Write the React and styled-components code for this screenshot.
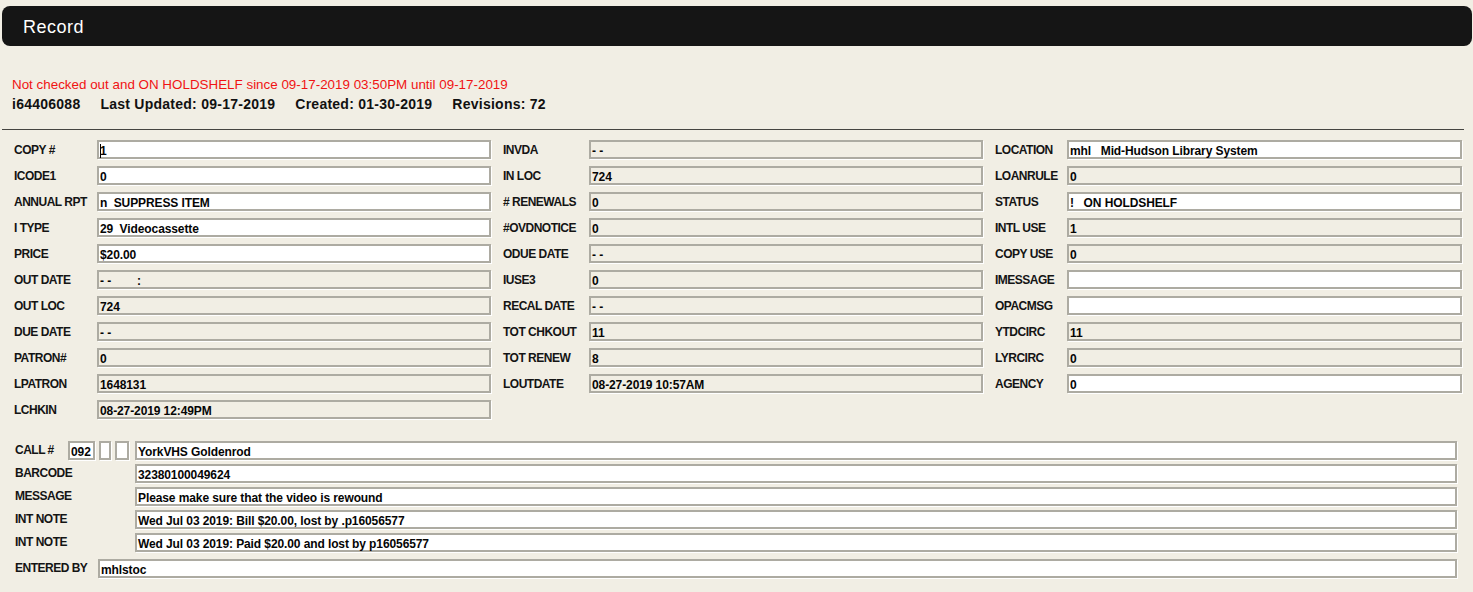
import React from "react";
import styled, { createGlobalStyle } from "styled-components";

const GlobalStyle = createGlobalStyle`
  html, body {
    margin: 0;
    padding: 0;
    background: #f1eee4;
  }
  body {
    font-family: "Liberation Sans", Arial, sans-serif;
    color: #111;
  }
`;

const Page = styled.div`
  width: 1473px;
  min-height: 592px;
  padding-top: 6px;
  box-sizing: border-box;
`;

const TitleBar = styled.div`
  margin: 0 1px 0 2px;
  height: 40px;
  background: #151515;
  border-radius: 8px;
  display: flex;
  align-items: center;
  padding-left: 21px;
`;

const Title = styled.h1`
  margin: 0;
  padding-top: 1px;
  font-size: 18px;
  font-weight: 400;
  letter-spacing: 0.5px;
  color: #ffffff;
  line-height: 40px;
`;

const Status = styled.div`
  margin-top: 31px;
  padding-left: 12px;
`;

const Alert = styled.div`
  font-size: 13.4px;
  line-height: 16px;
  color: #f01313;
`;

const Meta = styled.div`
  margin-top: 2px;
  display: flex;
  gap: 20px;
  font-size: 14px;
  font-weight: 700;
  line-height: 19px;
  letter-spacing: 0.25px;
  color: #111;
`;

const Divider = styled.hr`
  margin: 15px 9px 0 2px;
  border: 0;
  border-top: 1px solid #454440;
  height: 0;
`;

const FieldColumns = styled.div`
  margin-top: 10px;
  padding-left: 14px;
  display: flex;
  align-items: flex-start;
  gap: 12px;
`;

const Column = styled.div`
  display: grid;
  grid-template-columns: ${(p) => p.$labelWidth}px ${(p) => p.$inputWidth}px;
  grid-auto-rows: 19px;
  row-gap: 7px;
`;

const Label = styled.div`
  font-size: 12px;
  font-weight: 700;
  letter-spacing: -0.5px;
  line-height: 19px;
  padding-top: ${(p) => (p.$raised ? 0 : 1)}px;
  white-space: nowrap;
  color: #141414;
`;

const Field = styled.div`
  box-sizing: border-box;
  height: 19px;
  border: 2px solid #adaba2;
  box-shadow: 1px 1px 0 #ffffff;
  background: ${(p) => (p.$editable ? "#ffffff" : "#f1eee4")};
  padding: 2px 0 0 1px;
  font-size: 12px;
  font-weight: 700;
  letter-spacing: -0.1px;
  line-height: 14px;
  white-space: pre;
  color: #050505;
  width: ${(p) => (p.$width ? `${p.$width}px` : "auto")};
  flex: ${(p) => (p.$grow ? "1 1 auto" : "0 0 auto")};
`;

const CallText = styled(Field)`
  margin-left: 2px;
`;

const Caret = styled.span`
  display: inline-block;
  width: 1px;
  height: 14px;
  background: #000;
  vertical-align: -3px;
  margin-right: -1px;
`;

const Bottom = styled.div`
  margin-top: 22px;
  padding: 0 16px 0 15px;
  display: flex;
  flex-direction: column;
  gap: 4px;
`;

const BottomRow = styled.div`
  display: flex;
  align-items: flex-start;
  gap: ${(p) => p.$gap || 0}px;
  margin-top: ${(p) => p.$offset || 0}px;
`;

const BottomLabel = styled(Label)`
  flex: 0 0 ${(p) => p.$width}px;
`;

const columns = [
  {
    labelWidth: 83,
    inputWidth: 394,
    fields: [
      { label: "COPY #", value: "1", editable: true, caret: true },
      { label: "ICODE1", value: "0", editable: true },
      { label: "ANNUAL RPT", value: "n  SUPPRESS ITEM", editable: true },
      { label: "I TYPE", value: "29  Videocassette", editable: true },
      { label: "PRICE", value: "$20.00", editable: true },
      { label: "OUT DATE", value: "- -        :" },
      { label: "OUT LOC", value: "724" },
      { label: "DUE DATE", value: "- -" },
      { label: "PATRON#", value: "0" },
      { label: "LPATRON", value: "1648131" },
      { label: "LCHKIN", value: "08-27-2019 12:49PM" },
    ],
  },
  {
    labelWidth: 86,
    inputWidth: 394,
    fields: [
      { label: "INVDA", value: "- -" },
      { label: "IN LOC", value: "724" },
      { label: "# RENEWALS", value: "0" },
      { label: "#OVDNOTICE", value: "0" },
      { label: "ODUE DATE", value: "- -" },
      { label: "IUSE3", value: "0" },
      { label: "RECAL DATE", value: "- -" },
      { label: "TOT CHKOUT", value: "11" },
      { label: "TOT RENEW", value: "8" },
      { label: "LOUTDATE", value: "08-27-2019 10:57AM" },
    ],
  },
  {
    labelWidth: 72,
    inputWidth: 395,
    fields: [
      { label: "LOCATION", value: "mhl   Mid-Hudson Library System", editable: true },
      { label: "LOANRULE", value: "0" },
      { label: "STATUS", value: "!   ON HOLDSHELF", editable: true },
      { label: "INTL USE", value: "1" },
      { label: "COPY USE", value: "0" },
      { label: "IMESSAGE", value: "", editable: true },
      { label: "OPACMSG", value: "", editable: true },
      { label: "YTDCIRC", value: "11" },
      { label: "LYRCIRC", value: "0" },
      { label: "AGENCY", value: "0", editable: true },
    ],
  },
];

const notes = [
  { label: "BARCODE", value: "32380100049624" },
  { label: "MESSAGE", value: "Please make sure that the video is rewound" },
  { label: "INT NOTE", value: "Wed Jul 03 2019: Bill $20.00, lost by .p16056577" },
  { label: "INT NOTE", value: "Wed Jul 03 2019: Paid $20.00 and lost by p16056577" },
];

export default function App() {
  return (
    <>
      <GlobalStyle />
      <Page>
        <TitleBar>
          <Title>Record</Title>
        </TitleBar>

        <Status>
          <Alert>
            Not checked out and ON HOLDSHELF since 09-17-2019 03:50PM until 09-17-2019
          </Alert>
          <Meta>
            <span>i64406088</span>
            <span>Last Updated: 09-17-2019</span>
            <span>Created: 01-30-2019</span>
            <span>Revisions: 72</span>
          </Meta>
        </Status>

        <Divider />

        <FieldColumns>
          {columns.map((col, ci) => (
            <Column key={ci} $labelWidth={col.labelWidth} $inputWidth={col.inputWidth}>
              {col.fields.map((f, fi) => (
                <React.Fragment key={fi}>
                  <Label>{f.label}</Label>
                  <Field $editable={f.editable}>
                    {f.caret && <Caret />}
                    {f.value}
                  </Field>
                </React.Fragment>
              ))}
            </Column>
          ))}
        </FieldColumns>

        <Bottom>
          <BottomRow $gap={4}>
            <BottomLabel $raised $width={49}>CALL #</BottomLabel>
            <Field $editable $width={27}>092</Field>
            <Field $editable $width={12}></Field>
            <Field $editable $width={14}></Field>
            <CallText $editable $grow>YorkVHS Goldenrod</CallText>
          </BottomRow>
          {notes.map((n, i) => (
            <BottomRow key={i}>
              <BottomLabel $raised $width={120}>{n.label}</BottomLabel>
              <Field $editable $grow>{n.value}</Field>
            </BottomRow>
          ))}
          <BottomRow $offset={3}>
            <BottomLabel $raised $width={83}>ENTERED BY</BottomLabel>
            <Field $editable $grow>mhlstoc</Field>
          </BottomRow>
        </Bottom>
      </Page>
    </>
  );
}
